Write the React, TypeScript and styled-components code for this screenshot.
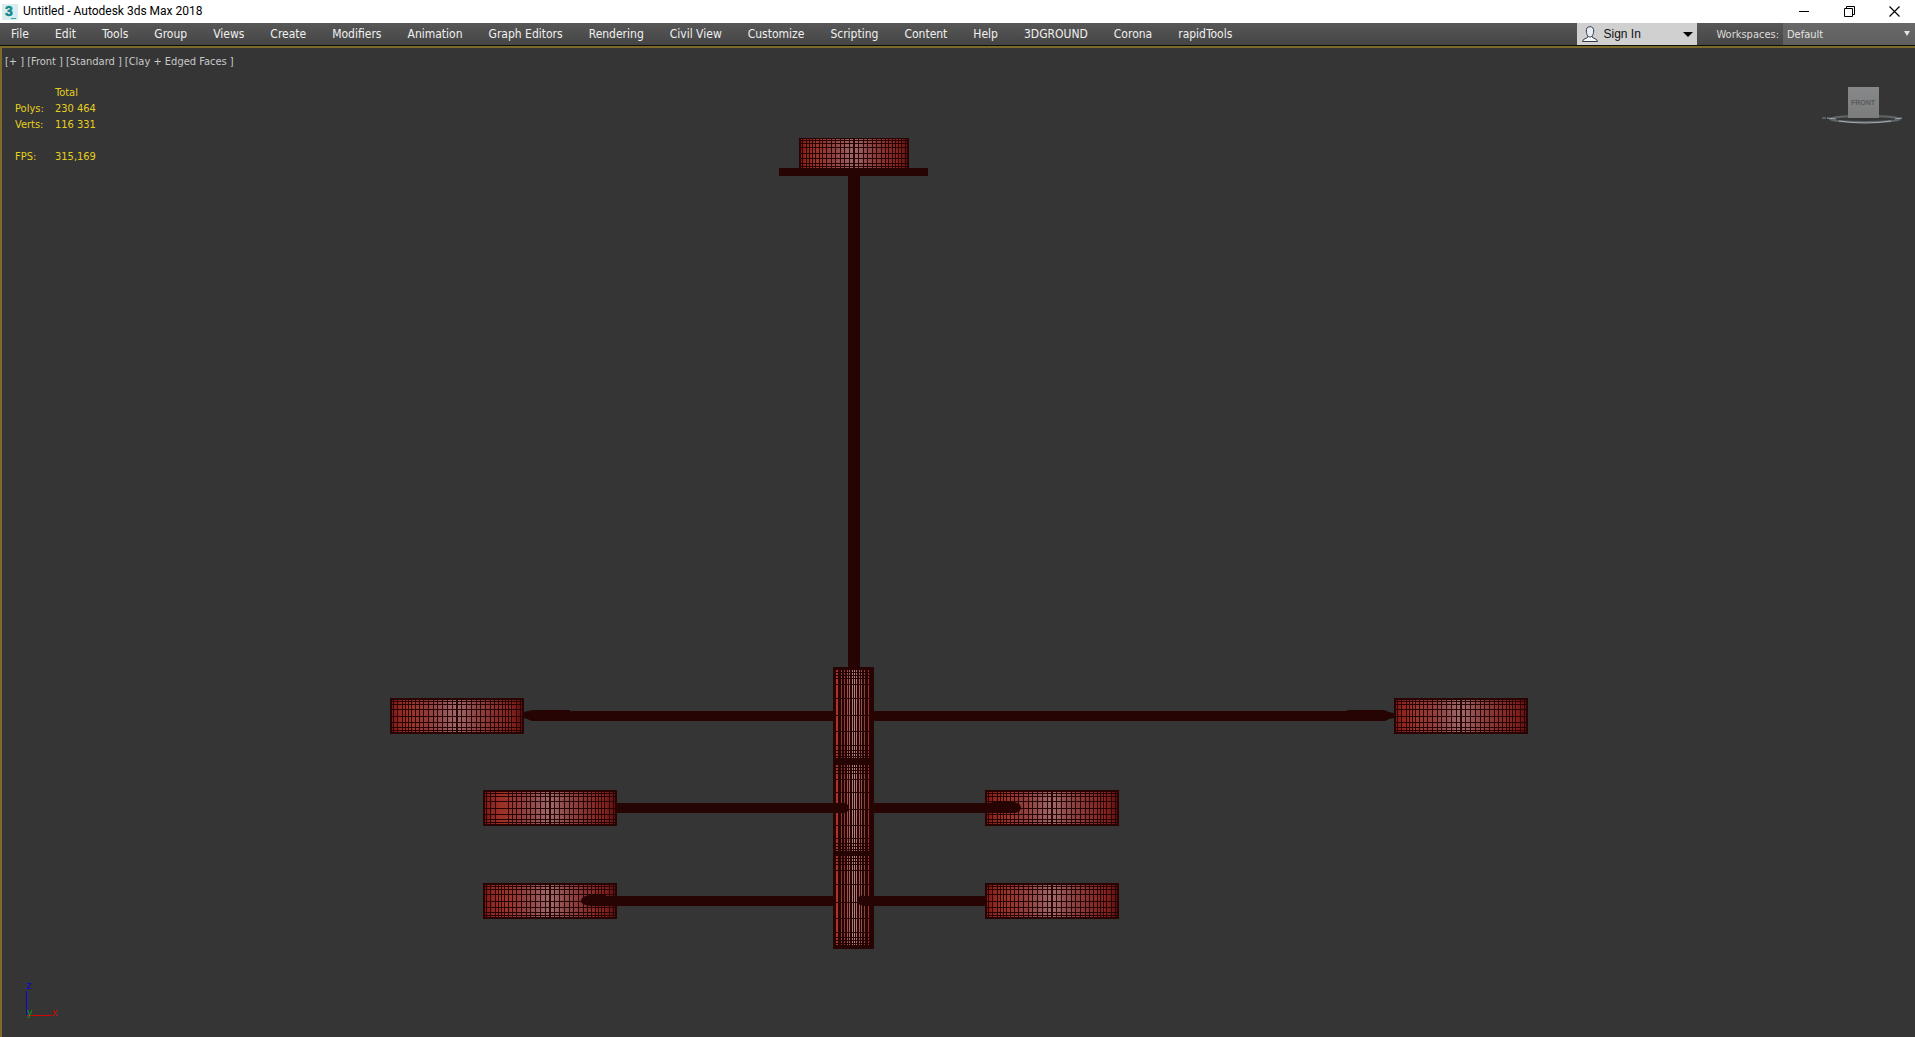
import React from "react";
import styled, { createGlobalStyle } from "styled-components";

const UI_FONT = `"DejaVu Sans Condensed", "DejaVu Sans", Tahoma, sans-serif`;
const TITLE_FONT = `Roboto, "Segoe UI", sans-serif`;
const EDGE = "#260404";

const GlobalStyle = createGlobalStyle`
  * { box-sizing: border-box; }
  body { margin: 0; background: #353535; }
  button, select { margin: 0; padding: 0; border: 0; background: none; color: inherit; font: inherit; }
  button { cursor: default; white-space: nowrap; }
`;

const Window = styled.div`
  display: flex;
  flex-direction: column;
  height: 100vh;
  overflow: hidden;
  font-family: ${UI_FONT};
`;

const TitleBar = styled.header`
  display: flex;
  align-items: center;
  height: 23px;
  flex: none;
  padding: 0 1px 0 2px;
  background: #fff;
  color: #000;
`;

const Title = styled.h1`
  flex: 1;
  margin: 0 0 0 5px;
  font: 400 12px/23px ${TITLE_FONT};
`;

const WindowButtons = styled.div`
  display: flex;
  gap: 5px;
`;

const WindowButton = styled.button`
  display: grid;
  place-items: center;
  width: 40px;
  height: 20px;
`;

const MenuBar = styled.div`
  display: flex;
  align-items: stretch;
  height: 23px;
  flex: none;
  border-bottom: 1px solid #0c0c0c;
  background: linear-gradient(#575757, #454545);
  color: #f0f0f0;
`;

const Menus = styled.nav`
  display: flex;
  flex: 1;
  gap: 26px;
  padding-left: 11px;
`;

const MenuButton = styled.button`
  font-size: 12px;
  line-height: 22px;
`;

const SignIn = styled.button`
  display: flex;
  align-items: center;
  gap: 5px;
  width: 120px;
  padding: 0 4px 0 5px;
  background: #d0d0d0;
  color: #111;
  font: 12px/22px "Liberation Sans", Arial, sans-serif;
`;

const SignInLabel = styled.span`
  flex: 1;
  text-align: left;
`;

const WorkspaceLabel = styled.label`
  padding: 0 4px 0 19px;
  font-size: 11px;
  line-height: 23px;
  color: #dcdcdc;
`;

const SelectBox = styled.div`
  position: relative;
  width: 132px;
  background: linear-gradient(#686868, #606060);
`;

const Select = styled.select`
  width: 100%;
  height: 22px;
  padding-left: 4px;
  appearance: none;
  font-size: 11px;
  line-height: 22px;
  color: #e4e4e4;
`;

const SelectArrow = styled.svg`
  position: absolute;
  top: 8px;
  right: 5px;
  pointer-events: none;
`;

const Viewport = styled.main`
  position: relative;
  flex: 1;
  min-height: 0;
  border-top: 2px solid #7d6a2a;
  border-left: 2px solid #7d6a2a;
  background: #353535;
`;

const Scene = styled.svg`
  position: absolute;
  inset: 0;
  width: 100%;
  height: 100%;
`;

const ViewLabels = styled.div`
  position: relative;
  display: flex;
  gap: 3px;
  padding: 6px 0 0 3px;
  color: #c8c8c8;
  font-size: 11px;
  line-height: 16px;
`;

const Stats = styled.table`
  position: relative;
  margin: 15px 0 0 13px;
  border-collapse: collapse;
  color: #e6cf1f;
  font-size: 11px;
  line-height: 16px;

  th, td {
    height: 16px;
    padding: 0;
    font-weight: 400;
    text-align: left;
  }
  th:first-child { width: 40px; }
`;

const ViewCube = styled.button`
  position: absolute;
  top: 36px;
  right: 10px;
  width: 86px;
  height: 42px;
`;

const AxisTripod = styled.svg`
  position: absolute;
  left: 18px;
  bottom: 16px;
`;

const menus = [
  "File", "Edit", "Tools", "Group", "Views", "Create", "Modifiers", "Animation",
  "Graph Editors", "Rendering", "Civil View", "Customize", "Scripting", "Content",
  "Help", "3DGROUND", "Corona", "rapidTools",
];

const viewLabels = ["[+ ]", "[Front ]", "[Standard ]", "[Clay + Edged Faces ]"];

const stats = [
  ["Polys:", "230 464"],
  ["Verts:", "116 331"],
  ["", ""],
  ["FPS:", "315,169"],
];

interface DrumProps {
  x: number;
  y: number;
  w: number;
  h: number;
  segments: number;
  rows: number[];
  open?: [number, number];
}

/* A cylinder seen from the side: its edges crowd together towards both rims. */
function Drum({ x, y, w, h, segments, rows, open }: DrumProps) {
  const columns = new Set<number>();
  let last = 0;
  for (let k = 1; k <= segments / 2; k++) {
    const at = Math.round((w / 2) * (1 - Math.cos((k * Math.PI) / segments)));
    if (at - last < 3) continue;
    last = at;
    for (const c of [at, w - 1 - at]) {
      if (!open || c < open[0] || c > open[1]) columns.add(c);
    }
  }
  return (
    <g shapeRendering="crispEdges">
      <rect x={x} y={y} width={w} height={h} fill="url(#clay)" />
      {[...columns].map((c) => (
        <rect key={c} x={x + c} y={y} width={1} height={h} fill={EDGE} />
      ))}
      {rows.map((r) => (
        <rect key={r} x={x} y={y + r} width={w} height={1} fill={EDGE} />
      ))}
      <path d={`M${x + 1} ${y}V${y + h}M${x + w - 1} ${y}V${y + h}`} stroke={EDGE} strokeWidth={2} />
    </g>
  );
}

const lampRows = [0, 1, 3, 6, 11, 18, 24, 29, 32, 34, 35];
const lamps: { x: number; y: number; open?: [number, number] }[] = [
  { x: 390, y: 698 },
  { x: 1394, y: 698 },
  { x: 483, y: 790, open: [13, 23] },
  { x: 985, y: 790 },
  { x: 483, y: 883 },
  { x: 985, y: 883 },
];

const columnStripes: [number, number, string][] = [
  [836, 2, "#a8342c"], [841, 1, "#8c3a34"], [844, 1, "#8c3a38"], [847, 1, "#9c5450"],
  [849, 1, "#a06060"], [852, 1, "#b07c7c"], [854, 1, "#b48484"], [856, 1, "#a87474"],
  [859, 1, "#9c5c5c"], [861, 1, "#98504c"], [864, 1, "#8c403c"], [868, 1, "#96302a"],
];

const columnSections: [number, number][] = [[670, 758], [765, 851], [856, 945]];

function columnRows() {
  const rows: number[] = [];
  for (const [top, bottom] of columnSections) {
    const h = bottom - top;
    for (const f of [2, 5, 8, 14, 28, 45, 61, 75, 80, 83, 86]) {
      rows.push(top + Math.round((f / 88) * h));
    }
  }
  return rows;
}

function Chandelier() {
  return (
    <Scene viewBox="2 48 1913 989" role="img" aria-label="Chandelier wireframe">
      <defs>
        <linearGradient id="clay">
          <stop offset="0" stopColor="#7c1414" />
          <stop offset="0.06" stopColor="#8e241e" />
          <stop offset="0.14" stopColor="#9c3228" />
          <stop offset="0.28" stopColor="#903c3a" />
          <stop offset="0.4" stopColor="#925252" />
          <stop offset="0.5" stopColor="#a06a6c" />
          <stop offset="0.6" stopColor="#904e4e" />
          <stop offset="0.75" stopColor="#863432" />
          <stop offset="0.9" stopColor="#862420" />
          <stop offset="1" stopColor="#5c0e0e" />
        </linearGradient>
      </defs>
      <Drum x={799} y={138} w={110} h={30} segments={36} rows={[0, 2, 5, 9, 15, 20, 25, 28]} />
      <g fill={EDGE} shapeRendering="crispEdges">
        <rect x={779} y={168} width={149} height={8} />
        <rect x={848} y={176} width={12} height={492} />
        <rect x={833} y={667} width={41} height={282} />
      </g>
      <g shapeRendering="crispEdges">
        {columnSections.map(([top, bottom]) =>
          columnStripes.map(([x, w, fill]) => (
            <rect key={`${top}-${x}`} x={x} y={top} width={w} height={bottom - top} fill={fill} />
          )),
        )}
        {columnRows().map((y) => (
          <rect key={y} x={833} y={y} width={41} height={1} fill={EDGE} />
        ))}
      </g>
      {lamps.map((lamp) => (
        <Drum key={`${lamp.x}-${lamp.y}`} {...lamp} w={134} h={36} segments={42} rows={lampRows} />
      ))}
      <g fill={EDGE}>
        <path d="M524 712L528 711L533 710H570V711H834V721H532L527 719L524 718Z" />
        <path d="M873 711H1347V710H1384L1389 712L1394 713V718L1389 719L1385 721H873Z" />
        <path d="M617 803H842Q849 803 849 808T842 813H617Z" />
        <path d="M873 803H990L993 802H1014Q1021 803 1021 808Q1020 813 1014 813H873Z" />
        <path d="M834 906H590Q581 905 581 901Q581 896 590 895H606V896H834Z" />
        <path d="M985 906H864Q857 905 857 901Q857 896 864 895V896H985Z" />
      </g>
    </Scene>
  );
}

export default function App() {
  return (
    <Window>
      <GlobalStyle />
      <TitleBar>
        <svg width="16" height="16" viewBox="0 0 16 16" aria-hidden="true">
          <rect width="16" height="16" fill="#d8eeee" />
          <text x="3" y="12" fontFamily="Liberation Sans, sans-serif" fontWeight="700" fontSize="14" fill="#138a8e" stroke="#138a8e" strokeWidth="0.5">3</text>
          <rect x="9" y="14" width="5" height="1" fill="#2aa6ac" />
        </svg>
        <Title>Untitled - Autodesk 3ds Max 2018</Title>
        <WindowButtons>
          <WindowButton aria-label="Minimize">
            <svg width="11" height="11"><path d="M0 5.5H10" stroke="#000" /></svg>
          </WindowButton>
          <WindowButton aria-label="Restore">
            <svg width="11" height="11" fill="none" stroke="#000">
              <path d="M0.5 2.5H8.5V10.5H0.5ZM2.5 2.5V0.5H10.5V8.5H8.5" />
            </svg>
          </WindowButton>
          <WindowButton aria-label="Close">
            <svg width="11" height="11"><path d="M0.5 0.5L10.5 10.5M10.5 0.5L0.5 10.5" stroke="#000" strokeWidth="1.2" /></svg>
          </WindowButton>
        </WindowButtons>
      </TitleBar>

      <MenuBar>
        <Menus>
          {menus.map((name) => (
            <MenuButton key={name}>{name}</MenuButton>
          ))}
        </Menus>
        <SignIn>
          <svg width="16" height="16" viewBox="0 0 16 16" aria-hidden="true">
            <path d="M0.5 15.5L1.5 13.5L5.5 11.5L6 10H10L10.5 11.5L14.5 13.5L15.5 15.5Z" fill="#f4f6fa" stroke="#333a48" />
            <path d="M8 0.7C5.2 0.7 4.2 2.6 4.3 5C4.4 8.5 6 11 8 11S11.6 8.5 11.7 5C11.8 2.6 10.8 0.7 8 0.7Z" fill="#e8edf5" stroke="#333a48" />
          </svg>
          <SignInLabel>Sign In</SignInLabel>
          <svg width="10" height="5" aria-hidden="true"><path d="M0 0H10L5 5Z" fill="#000" /></svg>
        </SignIn>
        <WorkspaceLabel htmlFor="workspace">Workspaces:</WorkspaceLabel>
        <SelectBox>
          <Select id="workspace" defaultValue="Default">
            <option>Default</option>
          </Select>
          <SelectArrow width="6" height="5" aria-hidden="true"><path d="M0 0H6L3 5Z" fill="#e4e4e4" /></SelectArrow>
        </SelectBox>
      </MenuBar>

      <Viewport>
        <Chandelier />
        <ViewLabels>
          {viewLabels.map((label) => (
            <button key={label}>{label}</button>
          ))}
        </ViewLabels>
        <Stats>
          <thead>
            <tr><th /><th scope="col">Total</th></tr>
          </thead>
          <tbody>
            {stats.map(([name, value], i) => (
              <tr key={i}><th scope="row">{name}</th><td>{value}</td></tr>
            ))}
          </tbody>
        </Stats>
        <ViewCube aria-label="View cube: front">
          <svg width="86" height="42" viewBox="0 0 86 42">
            <defs>
              <linearGradient id="cube" x2="0" y2="1">
                <stop offset="0" stopColor="#868889" />
                <stop offset="1" stopColor="#7c7c7c" />
              </linearGradient>
            </defs>
            <path d="M3 34H7" stroke="#888" />
            <ellipse cx="46" cy="35" rx="35" ry="3" fill="none" stroke="#5c6468" strokeWidth="2" />
            <path d="M8 34L17 35M20 37Q46 41 72 37M76 35L83 34" fill="none" stroke="#a4aab0" strokeWidth="1" />
            <rect x="29" y="3" width="31" height="31" fill="url(#cube)" />
            <text x="44" y="21" textAnchor="middle" fontFamily="Liberation Sans, sans-serif" fontWeight="700" fontSize="7" fill="#585c60">FRONT</text>
          </svg>
        </ViewCube>
        <AxisTripod width="42" height="46" viewBox="0 0 42 46" fontFamily="Liberation Sans, sans-serif" fontSize="11" aria-label="Axes">
          <path d="M6.5 16V40" stroke="#0808d8" />
          <path d="M7 40.5H32" stroke="#cc0808" />
          <text x="6" y="14" fill="#0808d8">z</text>
          <text x="32" y="41" fill="#cc0808">x</text>
          <text x="7" y="41" fill="#0a9a1a">y</text>
        </AxisTripod>
      </Viewport>
    </Window>
  );
}
